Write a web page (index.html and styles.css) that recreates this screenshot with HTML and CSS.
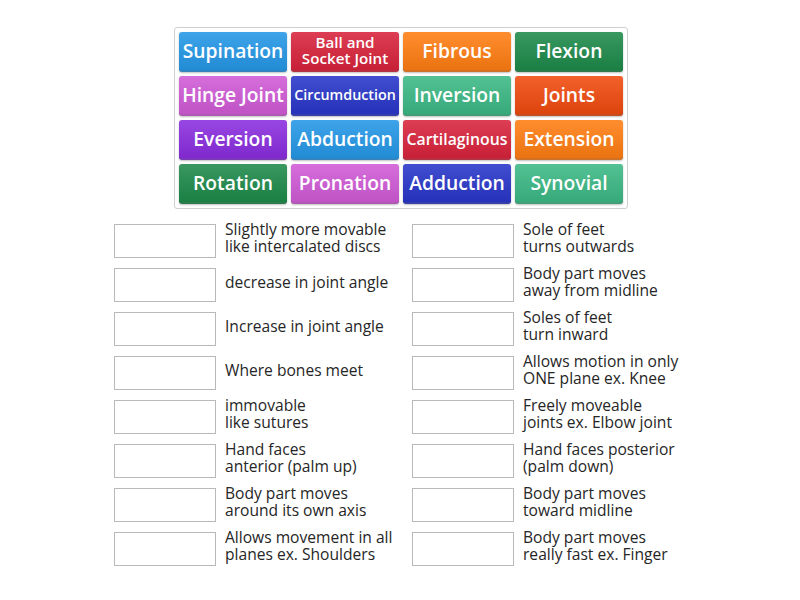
FILE: index.html
```html
<!DOCTYPE html>
<html>
<head>
	<meta charset="utf-8">
	<title>Joints match up</title>
	<link rel="stylesheet" href="styles.css">
</head>
<body>
	<div class="bank">
		<div class="tile blue">Supination</div>
		<div class="tile red ball">Ball and<br>Socket Joint</div>
		<div class="tile orange">Fibrous</div>
		<div class="tile green">Flexion</div>

		<div class="tile pink">Hinge Joint</div>
		<div class="tile navy tiny">Circumduction</div>
		<div class="tile teal">Inversion</div>
		<div class="tile scarlet">Joints</div>

		<div class="tile purple">Eversion</div>
		<div class="tile blue">Abduction</div>
		<div class="tile red small">Cartilaginous</div>
		<div class="tile orange">Extension</div>

		<div class="tile green">Rotation</div>
		<div class="tile pink">Pronation</div>
		<div class="tile navy">Adduction</div>
		<div class="tile teal">Synovial</div>
	</div>

	<div class="targets">
		<div class="col">
			<div class="row"><div class="slot"></div><p>Slightly more movable<br>like intercalated discs</p></div>
			<div class="row"><div class="slot"></div><p>decrease in joint angle</p></div>
			<div class="row"><div class="slot"></div><p>Increase in joint angle</p></div>
			<div class="row"><div class="slot"></div><p>Where bones meet</p></div>
			<div class="row"><div class="slot"></div><p>immovable<br>like sutures</p></div>
			<div class="row"><div class="slot"></div><p>Hand faces<br>anterior (palm up)</p></div>
			<div class="row"><div class="slot"></div><p>Body part moves<br>around its own axis</p></div>
			<div class="row"><div class="slot"></div><p>Allows movement in all<br>planes ex. Shoulders</p></div>
		</div>
		<div class="col">
			<div class="row"><div class="slot"></div><p>Sole of feet<br>turns outwards</p></div>
			<div class="row"><div class="slot"></div><p>Body part moves<br>away from midline</p></div>
			<div class="row"><div class="slot"></div><p>Soles of feet<br>turn inward</p></div>
			<div class="row"><div class="slot"></div><p>Allows motion in only<br>ONE plane ex. Knee</p></div>
			<div class="row"><div class="slot"></div><p>Freely moveable<br>joints ex. Elbow joint</p></div>
			<div class="row"><div class="slot"></div><p>Hand faces posterior<br>(palm down)</p></div>
			<div class="row"><div class="slot"></div><p>Body part moves<br>toward midline</p></div>
			<div class="row"><div class="slot"></div><p>Body part moves<br>really fast ex. Finger</p></div>
		</div>
	</div>
</body>
</html>
```

FILE: styles.css
```css
body {
	margin: 0;
	background-color: #ffffff;
	font-family: "Open Sans", "Liberation Sans", sans-serif;
	color: #262626;
}

.bank {
	width: 444px;
	margin: 27px 0 0 174px;
	padding: 4px;
	border: 1px solid #cfcfcf;
	border-radius: 3px;
	display: grid;
	grid-template-columns: repeat(4, 108px);
	grid-auto-rows: 40px;
	gap: 4px;
}

.tile {
	display: flex;
	align-items: center;
	justify-content: center;
	text-align: center;
	color: #ffffff;
	font-size: 19.3px;
	font-weight: 600;
	line-height: 16px;
	border-radius: 3px;
	border-bottom: 2px solid rgba(0, 0, 0, 0.18);
	box-sizing: border-box;
	background-image: linear-gradient(rgba(255, 255, 255, 0.12), rgba(0, 0, 0, 0.08));
	box-shadow: 0 1px 2px rgba(0, 0, 0, 0.25);
	white-space: nowrap;
}
.tile.small {
	font-size: 15.8px;
}
.tile.ball {
	font-size: 15.2px;
	padding-bottom: 3px;
}
.tile.tiny {
	font-size: 14.3px;
}

.blue { background-color: #2497e6; }
.red { background-color: #d8233b; }
.orange { background-color: #ff7d12; }
.green { background-color: #1d8a4a; }
.pink { background-color: #d05ad6; }
.navy { background-color: #2836c9; }
.teal { background-color: #3bb884; }
.scarlet { background-color: #f04a0e; }
.purple { background-color: #8a2ddf; }

.targets {
	display: flex;
	margin: 15px 0 0 114px;
}
.col {
	width: 298px;
	display: flex;
	flex-direction: column;
	gap: 10px;
}
.row {
	display: flex;
	align-items: center;
	height: 34px;
}
.slot {
	width: 100px;
	height: 32px;
	border: 1px solid #b9b9b9;
	flex-shrink: 0;
}
.row p {
	margin: -6px 0 0 9px;
	font-size: 15.6px;
	line-height: 17px;
}
```
